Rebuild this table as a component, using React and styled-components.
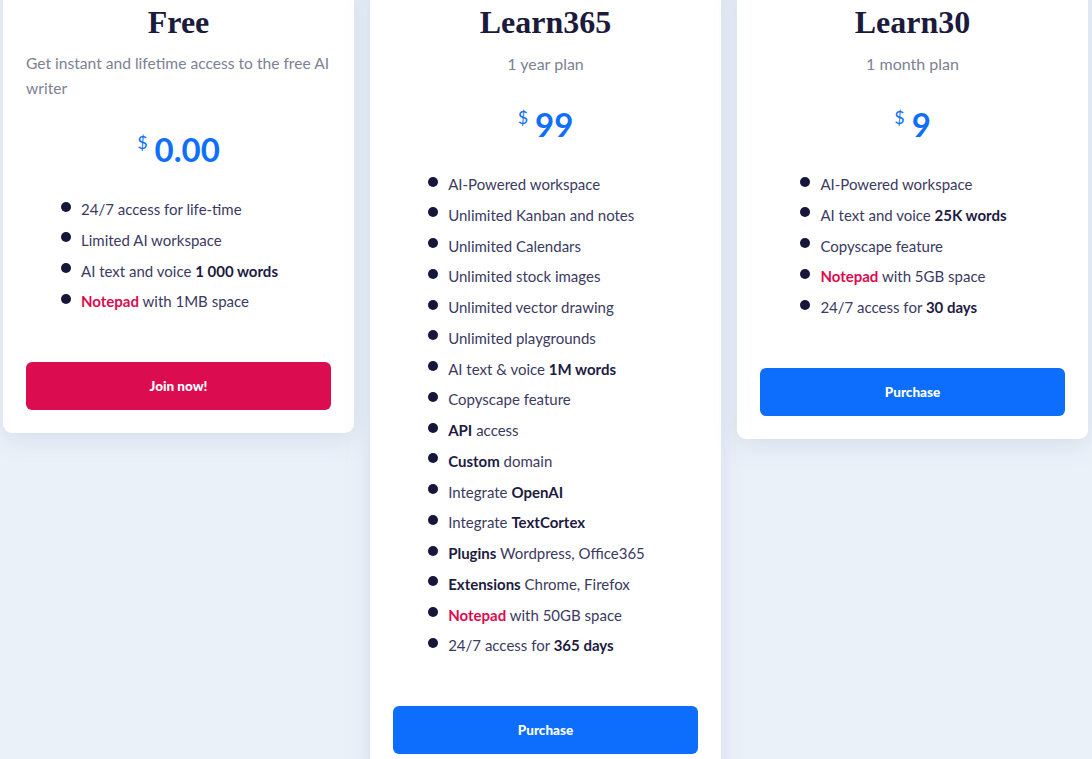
import styled, { createGlobalStyle } from 'styled-components'

const GlobalStyle = createGlobalStyle`
    body{
        margin: 0;
        background: #eaf1f9;
        font-family: Lato, "Noto Sans", sans-serif;
        overflow: hidden;
    }
`

const Plans = styled.div`
    display: flex;
    align-items: flex-start;
    gap: 16px;
    padding: 0 4px 0 3px;
    margin-top: -21px;
`

const Card = styled.div`
    flex: 0 0 351px;
    box-sizing: border-box;
    background: #fff;
    border-radius: 9px;
    padding: 23px;
    box-shadow: 0 6px 24px rgba(120, 140, 170, 0.18);
    text-align: center;
`

const Title = styled.h2`
    margin: 0;
    font-family: "Liberation Serif", serif;
    font-size: 32px;
    line-height: 40px;
    font-weight: 700;
    color: #1c1a3d;
`

const Subtitle = styled.p`
    margin: 9px 0 0;
    font-size: ${p => (p.$left ? 15.6 : 16)}px;
    line-height: 25px;
    color: #7c8293;
    text-align: ${p => (p.$left ? 'left' : 'center')};
`

const Price = styled.div`
    display: flex;
    justify-content: center;
    align-items: flex-start;
    gap: 7px;
    margin-top: 32px;
    color: #0f6ffa;

    .currency{
        font-size: 18px;
        line-height: 18px;
        margin-top: 0;
    }

    .amount{
        font-size: 33px;
        line-height: 33px;
        font-weight: 700;
    }
`

const Features = styled.ul`
    display: inline-block;
    list-style: none;
    margin: 32px 18px 0 0;
    padding: 0;
    text-align: left;
`

const Feature = styled.li`
    display: flex;
    align-items: center;
    gap: 10px;
    font-size: 15px;
    line-height: 22px;
    color: #3b3a5f;
    margin-bottom: 8.75px;

    &::before{
        content: '';
        width: 10px;
        height: 10px;
        border-radius: 50%;
        background: #16153a;
        margin-top: -5px;
        flex: none;
    }

    b{
        color: #1d1b41;
        font-weight: 700;
    }

    .red{
        color: #dc0b4e;
        font-weight: 700;
    }
`

const Button = styled.button`
    display: block;
    width: 100%;
    height: 48px;
    margin-top: 41px;
    border: none;
    border-radius: 6px;
    background: ${p => (p.$variant === 'red' ? '#dc0c50' : '#0d6efd')};
    color: #fff;
    font-family: Lato, "Noto Sans", sans-serif;
    font-weight: 900;
    font-size: 13.5px;
    cursor: pointer;
`

const plans = [
	{
		title: 'Free',
		subtitle: 'Get instant and lifetime access to the free AI writer',
		left: true,
		price: '0.00',
		button: 'Join now!',
		variant: 'red',
		features: [
			<>24/7 access for life-time</>,
			<>Limited AI workspace</>,
			<>AI text and voice <b>1 000 words</b></>,
			<><span className='red'>Notepad</span> with 1MB space</>,
		],
	},
	{
		title: 'Learn365',
		subtitle: '1 year plan',
		price: '99',
		button: 'Purchase',
		features: [
			<>AI-Powered workspace</>,
			<>Unlimited Kanban and notes</>,
			<>Unlimited Calendars</>,
			<>Unlimited stock images</>,
			<>Unlimited vector drawing</>,
			<>Unlimited playgrounds</>,
			<>AI text &amp; voice <b>1M words</b></>,
			<>Copyscape feature</>,
			<><b>API</b> access</>,
			<><b>Custom</b> domain</>,
			<>Integrate <b>OpenAI</b></>,
			<>Integrate <b>TextCortex</b></>,
			<><b>Plugins</b> Wordpress, Office365</>,
			<><b>Extensions</b> Chrome, Firefox</>,
			<><span className='red'>Notepad</span> with 50GB space</>,
			<>24/7 access for <b>365 days</b></>,
		],
	},
	{
		title: 'Learn30',
		subtitle: '1 month plan',
		price: '9',
		button: 'Purchase',
		features: [
			<>AI-Powered workspace</>,
			<>AI text and voice <b>25K words</b></>,
			<>Copyscape feature</>,
			<><span className='red'>Notepad</span> with 5GB space</>,
			<>24/7 access for <b>30 days</b></>,
		],
	},
]

export default function App() {
	return (
		<>
			<GlobalStyle />
			<Plans>
				{plans.map(plan => (
					<Card key={plan.title}>
						<Title>{plan.title}</Title>
						<Subtitle $left={plan.left}>{plan.subtitle}</Subtitle>
						<Price>
							<span className='currency'>$</span>
							<span className='amount'>{plan.price}</span>
						</Price>
						<Features>
							{plan.features.map((f, i) => (
								<Feature key={i}>
									<span>{f}</span>
								</Feature>
							))}
						</Features>
						<Button $variant={plan.variant}>{plan.button}</Button>
					</Card>
				))}
			</Plans>
		</>
	)
}
